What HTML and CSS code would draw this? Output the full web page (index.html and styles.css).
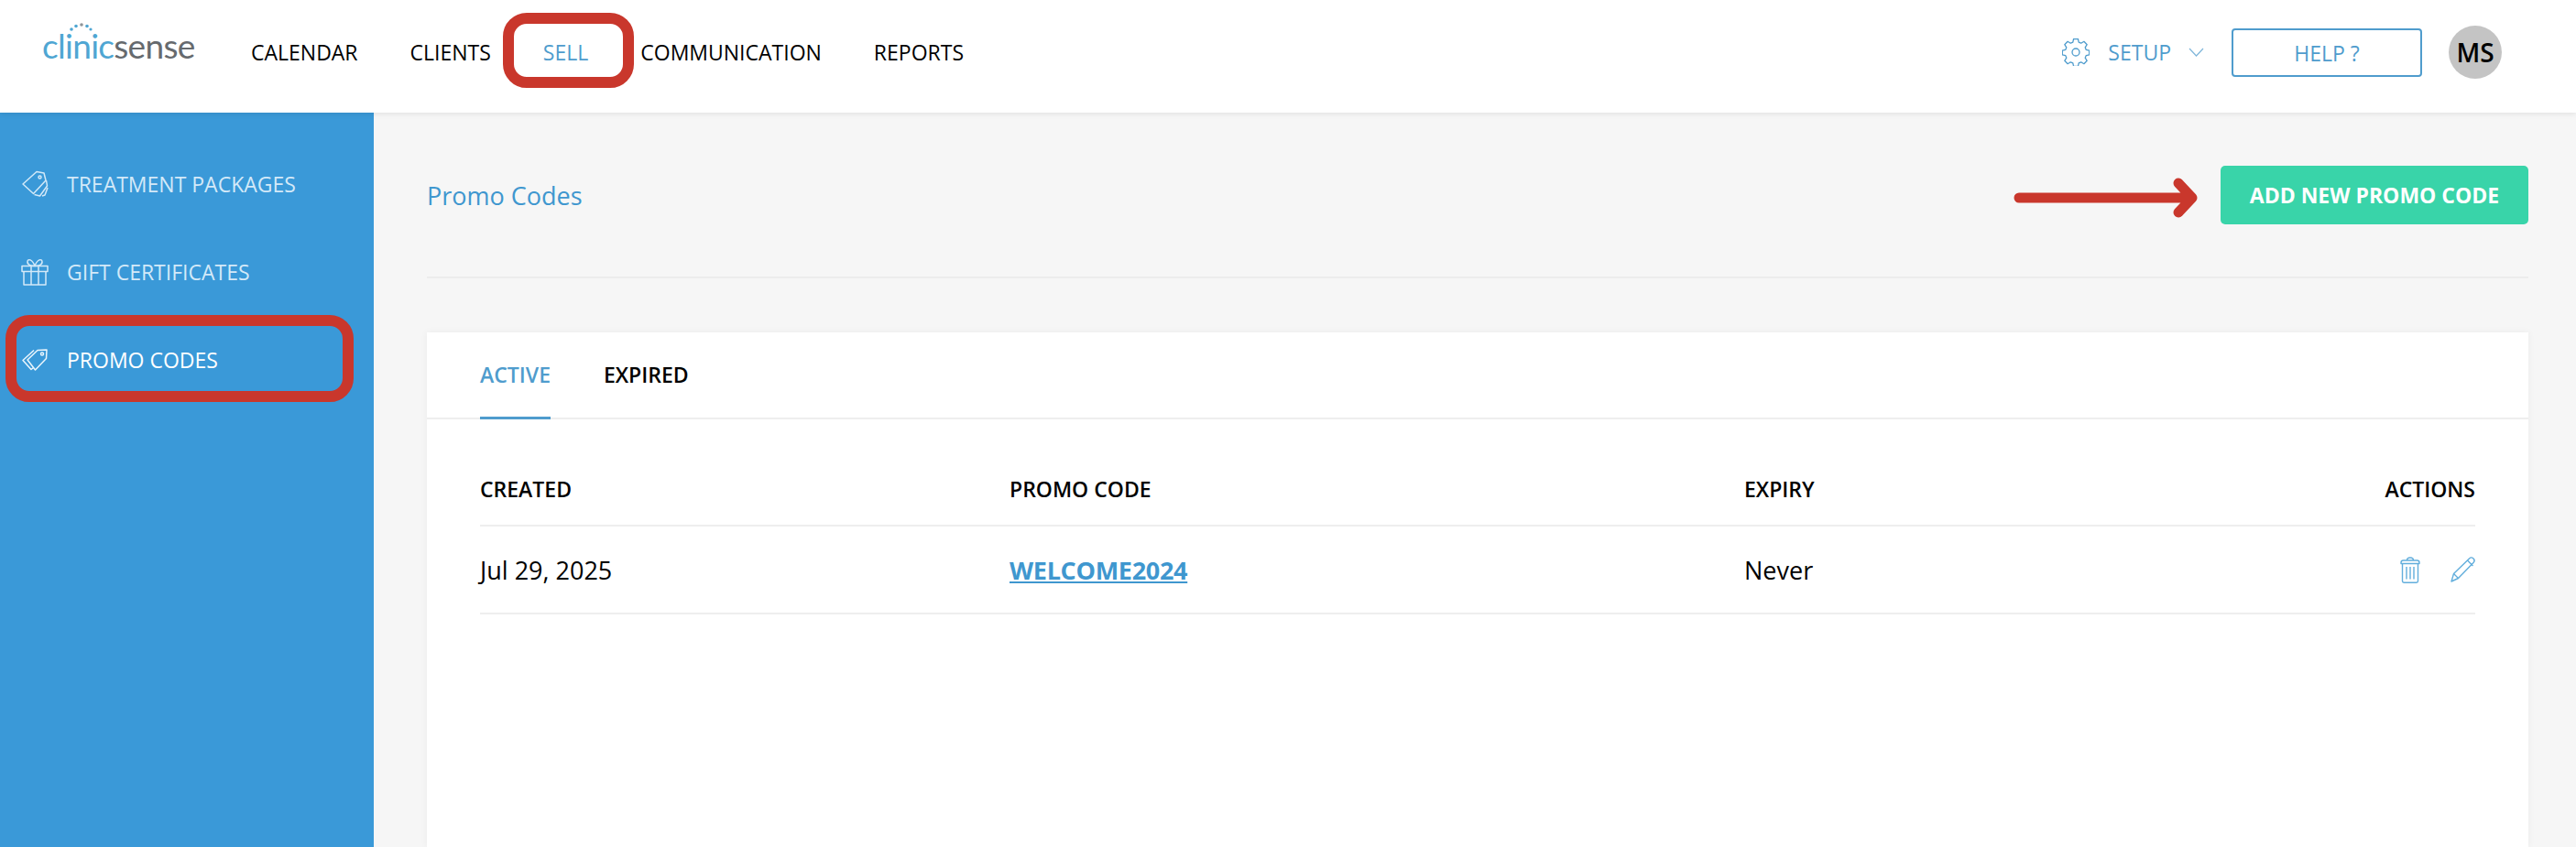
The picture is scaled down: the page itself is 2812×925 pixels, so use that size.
FILE: index.html
```html
<!DOCTYPE html>
<html>
<head>
    <title>Promo Codes</title>
    <link rel="stylesheet" href="styles.css">
</head>
<body>
    <header class="topbar">
        <a class="logo">
            <span class="logo-clinic">clinic</span><span class="logo-sense">sense</span>
            <svg class="logo-dots" width="26" height="9" viewBox="0 0 26 9">
                <circle cx="3" cy="7" r="1.8" fill="#4fa6d3"/>
                <circle cx="8" cy="3.5" r="1.8" fill="#4fa6d3"/>
                <circle cx="14" cy="2" r="1.8" fill="#8f9498"/>
                <circle cx="20" cy="3.5" r="1.8" fill="#4fa6d3"/>
                <circle cx="24" cy="7" r="1.6" fill="#4fa6d3"/>
            </svg>
        </a>
        <nav class="main-nav">
            <a>CALENDAR</a>
            <a>CLIENTS</a>
            <a class="active">SELL</a>
            <a>COMMUNICATION</a>
            <a>REPORTS</a>
        </nav>
        <div class="top-right">
            <a class="setup">
                <svg width="30" height="30" viewBox="0 0 30 30" fill="none" stroke="#4f9ccd" stroke-width="1.3" stroke-linejoin="round">
                    <path d="M12.6 1.5h4.8l.8 3.6 2.5 1.1 3.2-1.9 3.3 3.4-2 3.1 1 2.5 3.5.9v4.6l-3.500.9-1 2.500 2 3.100-3.300 3.400-3.200-1.900-2.500 1.100-.8 3.600h-4.800l-.8-3.600-2.500-1.100-3.200 1.900-3.300-3.400 2-3.100-1-2.500-3.500-.9v-4.600l3.500-.9 1-2.500-2-3.100 3.300-3.400 3.200 1.900 2.500-1.100z" transform="translate(0 -1)"/>
                    <circle cx="15" cy="15" r="4"/>
                </svg>
                <span>SETUP</span>
                <svg class="chevron" width="17" height="10" viewBox="0 0 17 10" fill="none" stroke="#7fb6da" stroke-width="1.2"><path d="M1 1l7.5 8L16 1"/></svg>
            </a>
            <a class="help-btn">HELP ?</a>
            <div class="avatar">MS</div>
        </div>
    </header>

    <div class="page">
        <aside class="sidebar">
            <a class="side-item">
                <svg width="30" height="30" viewBox="0 0 30 30" fill="none" stroke="#d3e9f8" stroke-width="1.5" stroke-linejoin="round">
                    <path d="M2 15L17 1.500l8 1.500 2 8-13.500 14.500z"/>
                    <circle cx="20.500" cy="7.500" r="1.500"/>
                    <path d="M27.500 11l1 6-8 11-6-1.500M29 19l-3 8-3 1"/>
                </svg>
                <span>TREATMENT PACKAGES</span>
            </a>
            <a class="side-item">
                <svg width="30" height="30" viewBox="0 0 30 30" fill="none" stroke="#d3e9f8" stroke-width="1.500" stroke-linejoin="round">
                    <path d="M1 8.500h28v6H1zM3 14.500h24V29H3zM11 8.500V29M19 8.500V29"/>
                    <path d="M15 8.500C11 8.500 6.500 7 7 3.500 7.500.5 12 .5 15 8.500zM15 8.500c4 0 8.500-1.500 8-5C22.500.5 18 .5 15 8.500z"/>
                </svg>
                <span>GIFT CERTIFICATES</span>
            </a>
            <a class="side-item current">
                <svg width="30" height="30" viewBox="0 0 30 30" fill="none" stroke="#eaf5fc" stroke-width="1.500" stroke-linejoin="round">
                    <path d="M7 15L18 4.500l10-.5-.5 9.500L15.500 26z"/>
                    <circle cx="23" cy="8.500" r="1.500"/>
                    <path d="M14 4.500L2 15.500l9 10 2.500-2"/>
                </svg>
                <span>PROMO CODES</span>
            </a>
        </aside>

        <main class="content">
            <div class="title-row">
                <h1>Promo Codes</h1>
                <a class="add-btn">ADD NEW PROMO CODE</a>
            </div>

            <section class="card">
                <div class="tabs">
                    <a class="tab active">ACTIVE</a>
                    <a class="tab">EXPIRED</a>
                </div>
                <div class="codes">
                    <div class="row head">
                        <span>CREATED</span>
                        <span>PROMO CODE</span>
                        <span>EXPIRY</span>
                        <span class="right">ACTIONS</span>
                    </div>
                    <div class="row">
                        <span>Jul 29, 2025</span>
                        <a class="code-link">WELCOME2024</a>
                        <span>Never</span>
                        <span class="actions">
                            <svg width="22" height="29" viewBox="0 0 22 29" fill="none" stroke="#62aedc" stroke-width="1.400" stroke-linejoin="round">
                                <path d="M1 6.500C1 4.500 2 4 3.500 4h15C20 4 21 4.500 21 6.500v1H1zM7.500 4c0-2 1-3 3.500-3s3.500 1 3.500 3"/>
                                <path d="M2.500 7.500V26.500c0 1 .7 1.700 1.700 1.700h13.600c1 0 1.700-.7 1.700-1.700V7.500M7 11v13.500M11 11v13.500M15 11v13.500"/>
                            </svg>
                            <svg width="27" height="28" viewBox="0 0 27 28" fill="none" stroke="#62aedc" stroke-width="1.400" stroke-linejoin="round">
                                <path d="M1 27l2.500-8.500L20.500 2c1.500-1.500 3.500-1 4.500 0s1.500 3 0 4.500L8.500 23.500z"/>
                                <path d="M18.500 4l6 6M3.500 18.500l5 5"/>
                            </svg>
                        </span>
                    </div>
                </div>
            </section>
        </main>
    </div>

    <!-- annotations drawn on top of the screenshot -->
    <div class="mark mark-sell"></div>
    <div class="mark mark-promo"></div>
    <svg class="mark-arrow" width="206" height="44" viewBox="0 0 206 44" fill="none" stroke="#c9372c" stroke-width="11" stroke-linecap="round" stroke-linejoin="round">
        <path d="M10 22H198M184 6l15 16-15 16"/>
    </svg>
</body>
</html>
```

FILE: styles.css
```css
* {
    box-sizing: border-box;
}
html, body {
    height: 100%;
}
body {
    margin: 0;
    overflow: hidden;
    font-family: 'Open Sans', sans-serif;
    font-size: 23px;
    color: #000;
    background-color: #f6f6f6;
}
.topbar {
    position: relative;
    z-index: 2;
    display: flex;
    align-items: center;
    height: 123px;
    padding-left: 46px;
    padding-right: 81px;
    padding-bottom: 10px;
    background: #fff;
    box-shadow: 0 1px 6px rgba(0,0,0,0.1);
}
.logo {
    position: relative;
    width: 166px;
    margin-right: 62px;
    margin-top: -14px;
    font-family: 'Lato', sans-serif;
    font-weight: 400;
    font-size: 37px;
    letter-spacing: -0.7px;
    line-height: 50px;
    white-space: nowrap;
}
.logo-clinic {
    color: #4fa6d3;
}
.logo-sense {
    color: #666a6e;
}
.logo-dots {
    position: absolute;
    left: 29px;
    top: 0;
}
.main-nav {
    display: flex;
    gap: 57px;
    margin-top: 1px;
}
.main-nav .active {
    color: #4f9ccd;
}
.top-right {
    display: flex;
    align-items: center;
    margin-left: auto;
}
.setup {
    display: flex;
    align-items: center;
    color: #4f9ccd;
}
.setup span {
    margin-left: 20px;
}
.chevron {
    margin-left: 19px;
}
.help-btn {
    display: flex;
    align-items: center;
    justify-content: center;
    width: 208px;
    height: 53px;
    margin-left: 30px;
    margin-top: 2px;
    border: 2px solid #4f9ccd;
    border-radius: 4px;
    color: #4f9ccd;
}
.avatar {
    display: flex;
    align-items: center;
    justify-content: center;
    width: 58px;
    height: 58px;
    margin-left: 29px;
    border-radius: 50%;
    background: #c4c4c4;
    font-size: 28px;
    font-weight: 600;
}
.page {
    display: flex;
    height: calc(100% - 123px);
}
.sidebar {
    width: 408px;
    flex-shrink: 0;
    padding-top: 50px;
    background-color: #3a99d8;
}
.side-item {
    display: flex;
    align-items: center;
    height: 56px;
    margin-bottom: 40px;
    padding-left: 23px;
    color: #d3e9f8;
}
.side-item span {
    margin-left: 20px;
}
.side-item.current {
    color: #fff;
}
.content {
    flex: 1;
    display: flex;
    flex-direction: column;
    padding: 58px 52px 0 58px;
}
.title-row {
    display: flex;
    align-items: center;
    justify-content: space-between;
    height: 123px;
    padding-bottom: 57px;
    border-bottom: 2px solid #ececec;
}
.title-row h1 {
    margin: 0;
    font-size: 27px;
    font-weight: 400;
    color: #3f97cf;
}
.add-btn {
    display: flex;
    align-items: center;
    justify-content: center;
    width: 336px;
    height: 64px;
    border-radius: 5px;
    background-color: #39d4a9;
    color: #fff;
    font-weight: 700;
}
.card {
    flex: 1;
    margin-top: 59px;
    background: #fff;
    box-shadow: 0 0 8px rgba(0,0,0,0.05);
}
.tabs {
    display: flex;
    gap: 58px;
    height: 95px;
    padding: 0 58px;
    border-bottom: 2px solid #eeeeee;
}
.tab {
    display: flex;
    align-items: center;
    height: 95px;
    border-bottom: 3px solid transparent;
    font-weight: 600;
}
.tab.active {
    color: #4f9ccd;
    border-bottom-color: #4f9ccd;
}
.codes {
    padding: 0 58px;
}
.row {
    display: grid;
    grid-template-columns: 578px 802px 1fr 200px;
    align-items: center;
    height: 96px;
    border-bottom: 2px solid #eeeeee;
    font-size: 27px;
}
.row.head {
    height: 117px;
    padding-top: 37px;
    font-size: 23px;
    font-weight: 600;
}
.right {
    text-align: right;
}
.code-link {
    color: #3f97cf;
    font-weight: 700;
    letter-spacing: -0.3px;
    text-decoration: underline;
}
.actions {
    display: flex;
    justify-content: flex-end;
    gap: 33px;
}
.mark {
    position: absolute;
    border: 12px solid #c9372c;
    border-radius: 26px;
}
.mark-sell {
    left: 549px;
    top: 14px;
    width: 143px;
    height: 82px;
    z-index: 3;
}
.mark-promo {
    left: 6px;
    top: 344px;
    width: 380px;
    height: 95px;
}
.mark-arrow {
    position: absolute;
    left: 2194px;
    top: 194px;
}
```
